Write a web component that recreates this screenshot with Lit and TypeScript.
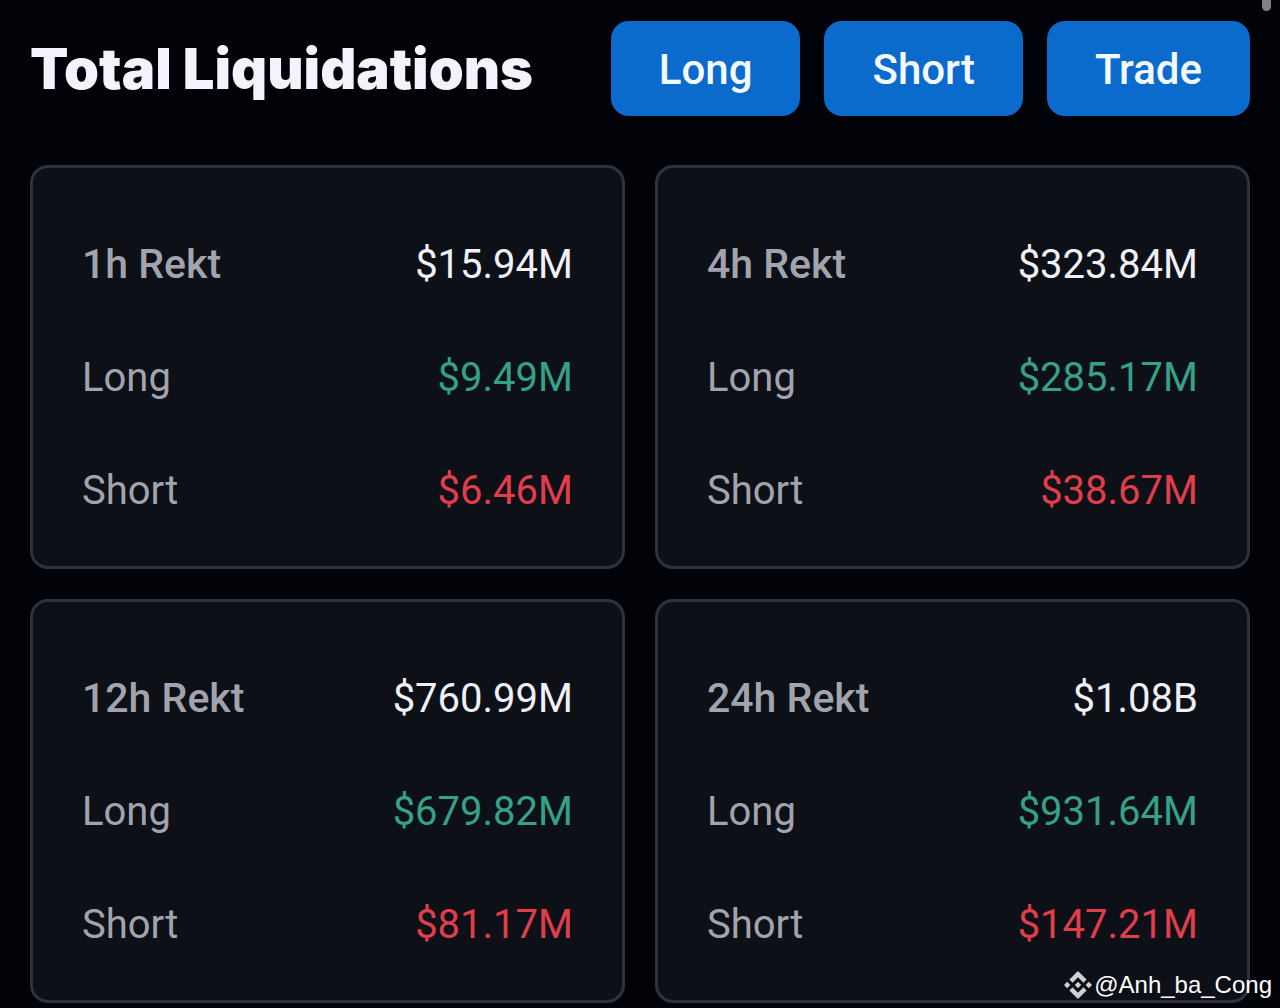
import { LitElement, html, css } from "lit";
import { customElement, property } from "lit/decorators.js";

interface Period {
  label: string;
  total: string;
  long: string;
  short: string;
}

const PERIODS: Period[] = [
  { label: "1h Rekt", total: "$15.94M", long: "$9.49M", short: "$6.46M" },
  { label: "4h Rekt", total: "$323.84M", long: "$285.17M", short: "$38.67M" },
  { label: "12h Rekt", total: "$760.99M", long: "$679.82M", short: "$81.17M" },
  { label: "24h Rekt", total: "$1.08B", long: "$931.64M", short: "$147.21M" },
];

@customElement("rekt-card")
export class RektCard extends LitElement {
  @property({ attribute: false }) period!: Period;

  static styles = css`
    :host {
      display: block;
      box-sizing: border-box;
      padding: 40px 49px 19px;
      border: 3px solid #2f323b;
      border-radius: 18px;
      background: #0d1017;
    }
    .rows {
      margin: 0;
    }
    .row {
      display: flex;
      justify-content: space-between;
      align-items: center;
      gap: 16px;
      padding: 32px 0;
      font-size: 40px;
      line-height: 49px;
    }
    .name {
      color: #a1a4ad;
    }
    .value {
      margin: 0;
      color: #eff1f7;
    }
    .total .name {
      font-size: 41px;
      font-weight: 500;
    }
    .long .value {
      color: #35a186;
    }
    .short .value {
      color: #e03e4c;
    }
  `;

  render() {
    const { label, total, long, short } = this.period;
    return html`
      <dl class="rows">
        <div class="row total"><dt class="name">${label}</dt><dd class="value">${total}</dd></div>
        <div class="row long"><dt class="name">Long</dt><dd class="value">${long}</dd></div>
        <div class="row short"><dt class="name">Short</dt><dd class="value">${short}</dd></div>
      </dl>
    `;
  }
}

@customElement("app-root")
export class AppRoot extends LitElement {
  static styles = css`
    :host {
      display: block;
      position: relative;
      box-sizing: border-box;
      min-height: 100vh;
      padding: 21px 30px 4px;
      background: #010308;
      font-family: Roboto, "Liberation Sans", sans-serif;
    }
    .header {
      display: flex;
      justify-content: space-between;
      align-items: center;
      gap: 24px;
      margin-bottom: 49px;
    }
    .title {
      margin: 0;
      color: #f3f4fb;
      font-family: Inter, "Liberation Sans", sans-serif;
      font-size: 56px;
      font-weight: 900;
      line-height: 72px;
      white-space: nowrap;
    }
    .actions {
      display: flex;
      gap: 24px;
    }
    .action {
      padding: 24px 48px 22px;
      border: 0;
      border-radius: 18px;
      background: #0b6bcd;
      color: #f4f9ff;
      font: 500 42px/49px Roboto, "Liberation Sans", sans-serif;
      cursor: pointer;
    }
    .cards {
      display: grid;
      grid-template-columns: repeat(2, minmax(0, 1fr));
      gap: 30px;
    }
    .thumb {
      position: absolute;
      top: 0;
      right: 9px;
      width: 9px;
      height: 11px;
      border-radius: 0 0 5px 5px;
      background: #808185;
    }
    .credit {
      position: absolute;
      right: 8px;
      bottom: 8px;
      display: flex;
      align-items: center;
      gap: 2px;
      color: #fff;
      font: 24px/30px "Liberation Sans", Arial, sans-serif;
    }
    .mark {
      width: 28px;
      height: 28px;
      fill: #cfd1d5;
    }
  `;

  render() {
    return html`
      <header class="header">
        <h1 class="title">Total Liquidations</h1>
        <div class="actions">
          ${["Long", "Short", "Trade"].map(
            (name) => html`<button class="action" type="button">${name}</button>`
          )}
        </div>
      </header>
      <main class="cards">
        ${PERIODS.map((period) => html`<rekt-card .period=${period}></rekt-card>`)}
      </main>
      <div class="thumb"></div>
      <div class="credit">
        <svg class="mark" viewBox="0 0 24 24" aria-hidden="true">
          <path d="M16.624 13.92l2.717 2.716-7.353 7.353-7.353-7.352 2.717-2.717 4.636 4.66 4.636-4.66zm4.637-4.636L24 12l-2.715 2.716L18.568 12l2.693-2.716zm-9.272 0l2.716 2.692-2.717 2.717L9.272 12l2.716-2.715zm-9.273 0L5.41 12l-2.692 2.692L0 12l2.716-2.716zM11.99.01l7.352 7.33-2.717 2.715-4.636-4.636-4.636 4.66-2.717-2.716L11.989.011z"/>
        </svg>
        <span>@Anh_ba_Cong</span>
      </div>
    `;
  }
}
